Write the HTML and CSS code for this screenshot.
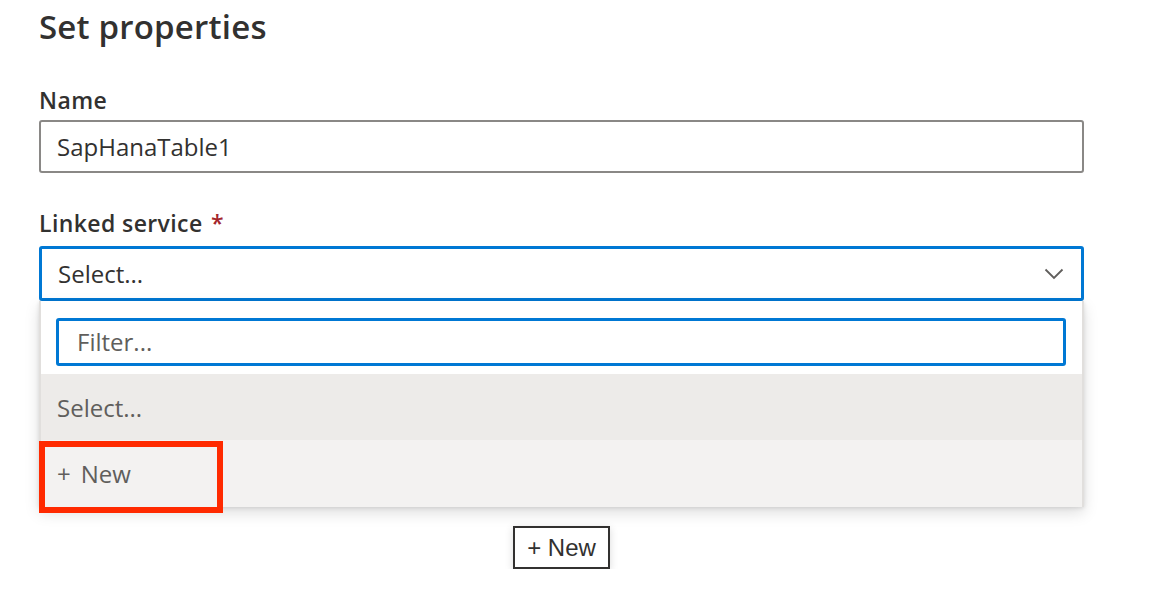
FILE: index.html
```html
<!DOCTYPE html>
<html>
<head>
<meta charset="utf-8">
<link rel="stylesheet" href="styles.css">
</head>
<body>
<div class="form">
  <h1 class="title">Set properties</h1>
  <div class="label">Name</div>
  <div class="textbox">SapHanaTable1</div>
  <div class="label label-ls">Linked service <span class="req">*</span></div>
  <div class="select">
    <span>Select...</span>
    <svg class="chev" width="20" height="12" viewBox="0 0 20 12"><path d="M1.5 1.5 L10 10 L18.5 1.5" fill="none" stroke="#605e5c" stroke-width="1.8"/></svg>
  </div>
  <div class="panel">
    <div class="filter-wrap"><div class="filter">Filter...</div></div>
    <div class="opt opt-sel">Select...</div>
    <div class="opt opt-new"><span class="plus">+</span>New</div>
    <div class="highlight"></div>
  </div>
  <div class="btn-row"><div class="btn">+ New</div></div>
</div>
</body>
</html>
```
FILE: styles.css
```css
html, body { margin: 0; padding: 0; background: #fff; }
body { font-family: "Open Sans", "Noto Sans", sans-serif; color: #323130; }
.form { width: 1045px; margin-left: 39px; }
.title { margin: 0; padding-top: 7px; font-size: 33px; line-height: 40px; font-weight: 600; letter-spacing: 0.2px; }
.label { margin-top: 38px; font-size: 23px; font-weight: 600; line-height: 30px; letter-spacing: 0.4px; }
.label-ls { margin-top: 35px; }
.req { color: #a4262c; margin-left: 2px; }
.textbox { margin-top: 5px; height: 49px; border: 2px solid #8a8886; border-radius: 3px; padding: 0 16px; font-size: 24px; line-height: 49px; color: #323130; }
.select { margin-top: 8px; height: 49px; border: 3px solid #0078d4; border-radius: 3px; padding: 0 17px 0 16px; display: flex; align-items: center; justify-content: space-between; font-size: 24px; color: #323130; }
.chev { display: block; }
.panel { position: relative; height: 206px; background: #fff; box-shadow: 0 6px 14px rgba(0,0,0,.13), 0 1px 4px rgba(0,0,0,.11); border-left: 2px solid #e1dfdd; border-right: 2px solid #e1dfdd; box-sizing: border-box; display: flex; flex-direction: column; }
.filter-wrap { padding: 17px 16px 8px 15px; }
.filter { height: 42px; border: 3px solid #0078d4; border-radius: 3px; padding: 0 18px; font-size: 24px; line-height: 42px; color: #605e5c; }
.opt { padding: 0 16px; font-size: 24px; color: #605e5c; display: flex; align-items: center; }
.opt-sel { height: 66px; background: #edebe9; }
.opt-new { flex: 1; background: #f3f2f1; }
.plus { margin-right: 10px; }
.highlight { position: absolute; left: -2px; top: 140px; width: 172px; height: 60px; border: 6px solid #ff2a00; }
.btn-row { display: flex; justify-content: center; margin-top: 19px; }
.btn { height: 39px; padding: 0 12px; border: 2px solid #323130; font-family: "Liberation Sans", Arial, sans-serif; font-size: 24px; line-height: 39px; color: #323130; background: #fff; box-shadow: 0 2px 8px rgba(0,0,0,.15); }
```
